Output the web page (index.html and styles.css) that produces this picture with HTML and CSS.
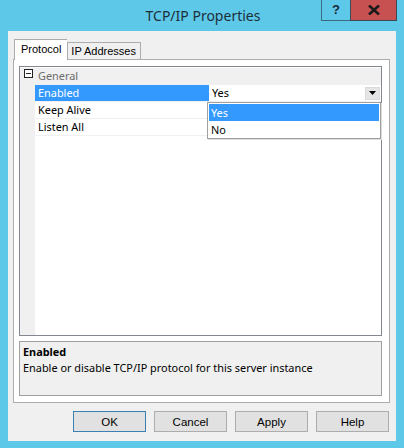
FILE: index.html
```html
<!DOCTYPE html>
<html lang="en">
<head>
  <meta charset="UTF-8">
  <title>TCP/IP Properties</title>
  <link rel="stylesheet" href="styles.css">
</head>
<body>
  <div class="window">
    <div class="titlebar">
      <span></span>
      <span class="title">TCP/IP Properties</span>
      <div class="caption-buttons">
        <div class="cap-help">?</div>
        <div class="cap-close">
          <svg width="12" height="10" viewBox="0 0 12 10">
            <path d="M1 0.5 L11 9.5 M11 0.5 L1 9.5" stroke="#1a1a1a" stroke-width="2.6"/>
          </svg>
        </div>
      </div>
    </div>

    <div class="client">
      <div class="tabs">
        <div class="tab active">Protocol</div>
        <div class="tab">IP Addresses</div>
      </div>

      <div class="tab-panel">
        <div class="grid">
          <div class="row category">
            <div class="margin">
              <span class="expander"></span>
            </div>
            <div class="cat-name">General</div>
          </div>
          <div class="row">
            <div class="margin"></div>
            <div class="name selected">Enabled</div>
            <div class="value editing">
              <span>Yes</span>
              <span class="drop-btn">
                <svg width="7" height="4" viewBox="0 0 7 4"><path d="M0 0 H7 L3.5 4 Z" fill="#000"/></svg>
              </span>
            </div>
          </div>
          <div class="row">
            <div class="margin"></div>
            <div class="name">Keep Alive</div>
            <div class="value"></div>
          </div>
          <div class="row">
            <div class="margin"></div>
            <div class="name">Listen All</div>
            <div class="value"></div>
          </div>
          <div class="grid-fill">
            <div class="margin"></div>
          </div>

          <div class="dropdown">
            <div class="option selected">Yes</div>
            <div class="option">No</div>
          </div>
        </div>

        <div class="description">
          <div class="desc-title">Enabled</div>
          <div class="desc-text">Enable or disable TCP/IP protocol for this server instance</div>
        </div>
      </div>

      <div class="buttons">
        <button class="default">OK</button>
        <button>Cancel</button>
        <button>Apply</button>
        <button>Help</button>
      </div>
    </div>
  </div>
</body>
</html>
```

FILE: styles.css
```css
body {
  margin: 0;
  background-color: #5ec8e9;
  font-family: 'Noto Sans', 'Open Sans', sans-serif;
}

.window {
  width: 404px;
  height: 448px;
  display: flex;
  flex-direction: column;
}

.titlebar {
  height: 31px;
  display: grid;
  grid-template-columns: 1fr auto 1fr;
}

.title {
  font-size: 14px;
  color: #1b2f3a;
  line-height: 32px;
  padding-left: 2px;
}

.caption-buttons {
  justify-self: end;
  display: flex;
  height: 21px;
  margin-right: 7px;
}

.cap-help {
  width: 28px;
  border: 1px solid #3a6a80;
  border-top: none;
  border-right: none;
  font-family: 'Liberation Sans', sans-serif;
  font-weight: bold;
  font-size: 13px;
  color: #1a2a3a;
  text-align: center;
  line-height: 20px;
}

.cap-close {
  width: 45px;
  background-color: #c75050;
  border: 1px solid #3a4a5a;
  border-top: none;
  display: flex;
  align-items: center;
  justify-content: center;
}

.client {
  flex: 1;
  margin: 0 8px 7px 8px;
  background-color: #f0f0f0;
  padding: 8px 6px 0 5px;
  display: flex;
  flex-direction: column;
}

.tabs {
  display: flex;
  align-items: flex-end;
  padding-left: 1px;
  height: 20px;
  position: relative;
  z-index: 1;
}

.tab {
  font-family: 'Liberation Sans', Arial, sans-serif;
  font-size: 11px;
  color: #000;
  border: 1px solid #acacac;
  border-bottom: none;
  background-color: #f0f0f0;
  padding: 0 4px 0 3px;
  height: 16px;
  line-height: 17px;
}

.tab.active {
  background-color: #ffffff;
  height: 20px;
  line-height: 18px;
  padding: 0 6px 0 6px;
  margin-bottom: -1px;
  border-right: none;
}

.tab-panel {
  border: 1px solid #acacac;
  background-color: #ffffff;
  height: 344px;
  box-sizing: border-box;
  padding: 6px 7px 6px 5px;
  display: flex;
  flex-direction: column;
  gap: 5px;
}

.grid {
  position: relative;
  flex: 1;
  border: 1px solid #828790;
  background-color: #ffffff;
  display: flex;
  flex-direction: column;
  padding-top: 1px;
  font-size: 10.9px;
}

.row {
  display: flex;
  height: 16px;
  border-bottom: 1px solid #f0f0f0;
  line-height: 16px;
}

.row.category {
  background-color: #f0f0f0;
  border-bottom-color: #f0f0f0;
}

.margin {
  width: 15px;
  flex-shrink: 0;
  background-color: #f0f0f0;
  display: flex;
  justify-content: center;
  align-items: flex-start;
}

.expander {
  width: 7px;
  height: 7px;
  border: 1px solid #222;
  margin-top: 1px;
  margin-left: 1px;
  background: linear-gradient(#222, #222) no-repeat center / 5px 1px, #fff;
}

.cat-name {
  color: #6d6d6d;
  padding-left: 3px;
}

.name {
  width: 170px;
  padding-left: 3px;
  border-right: 1px solid #f0f0f0;
  color: #000;
}

.name.selected {
  background-color: #3399ff;
  color: #ffffff;
  border-right-color: #3399ff;
}

.value {
  flex: 1;
  padding-left: 3px;
  display: flex;
  justify-content: space-between;
  align-items: center;
}

.drop-btn {
  width: 15px;
  height: 13px;
  margin-right: 1px;
  background-color: #e5e5e5;
  border: 1px solid #dadada;
  display: flex;
  align-items: center;
  justify-content: center;
  box-sizing: border-box;
}

.grid-fill {
  flex: 1;
  display: flex;
}

.dropdown {
  position: absolute;
  left: 187px;
  top: 35px;
  width: 174px;
  height: 37px;
  box-sizing: border-box;
  border: 1px solid #a0a0a0;
  background-color: #ffffff;
  padding: 1px;
  box-shadow: 1px 1px 0 #dcdcdc;
}

.option {
  height: 17px;
  line-height: 17px;
  padding-left: 2px;
}

.option.selected {
  background-color: #3399ff;
  color: #ffffff;
}

.description {
  height: 55px;
  box-sizing: border-box;
  border: 1px solid #a0a0a0;
  background-color: #f0f0f0;
  padding: 2px 3px;
  font-size: 10.9px;
  line-height: 16px;
}

.desc-title {
  font-weight: bold;
}

.buttons {
  display: flex;
  justify-content: flex-end;
  gap: 8px;
  margin-top: 8px;
  padding-right: 1px;
}

button {
  width: 73px;
  height: 21px;
  font-family: 'Liberation Sans', Arial, sans-serif;
  font-size: 11.5px;
  color: #000;
  background-color: #e1e1e1;
  border: 1px solid #adadad;
  padding: 0;
}

button.default {
  border-color: #3c7fb1;
}
```
